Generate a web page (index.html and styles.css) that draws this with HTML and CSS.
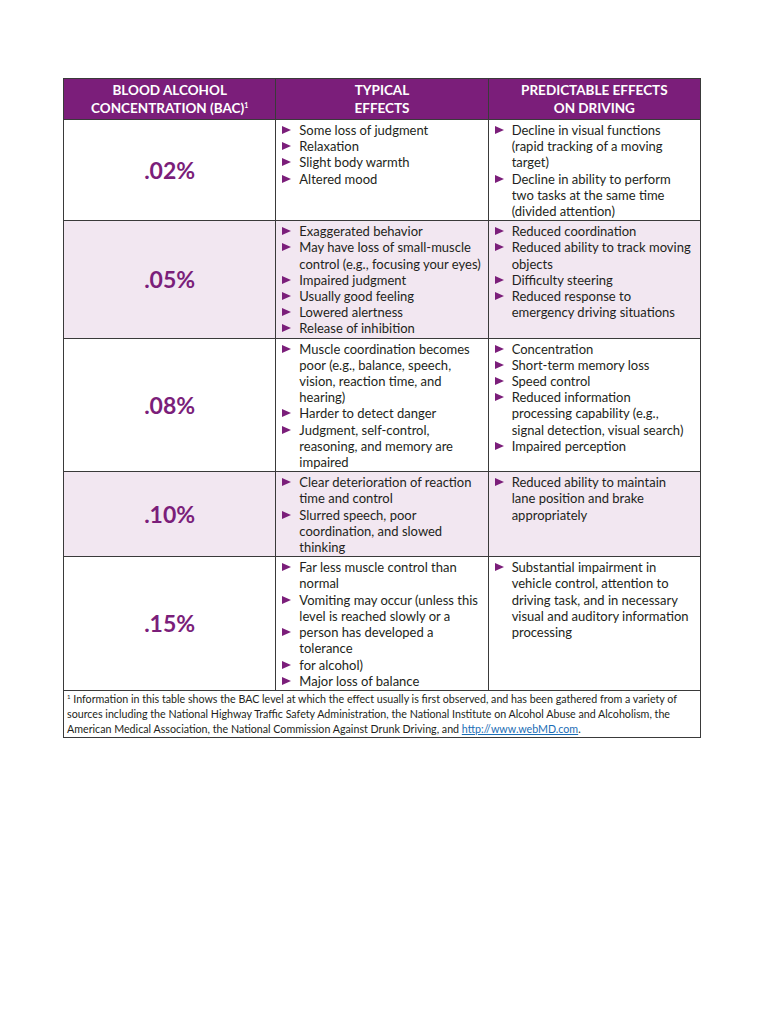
FILE: index.html
```html
<!DOCTYPE html>
<html lang="en">
<head>
  <meta charset="UTF-8">
  <meta name="viewport" content="width=device-width, initial-scale=1.0">
  <title>BAC Effects</title>
  <link rel="stylesheet" href="styles.css">
</head>
<body>
  <table class="bac-table">
    <thead>
      <tr class="head-row">
        <th>BLOOD ALCOHOL<br>CONCENTRATION (BAC)<sup>1</sup></th>
        <th>TYPICAL<br>EFFECTS</th>
        <th>PREDICTABLE EFFECTS<br>ON DRIVING</th>
      </tr>
    </thead>
    <tbody>
      <!-- .02 -->
      <tr class="r1">
        <td class="level">.02%</td>
        <td>
          <ul>
            <li>Some loss of judgment</li>
            <li>Relaxation</li>
            <li>Slight body warmth</li>
            <li>Altered mood</li>
          </ul>
        </td>
        <td class="driving">
          <ul>
            <li>Decline in visual functions (rapid tracking of a moving target)</li>
            <li>Decline in ability to perform two tasks at the same time (divided attention)</li>
          </ul>
        </td>
      </tr>
      <!-- .05 -->
      <tr class="r2 shaded">
        <td class="level">.05%</td>
        <td>
          <ul>
            <li>Exaggerated behavior</li>
            <li>May have loss of small-muscle control (e.g., focusing your eyes)</li>
            <li>Impaired judgment</li>
            <li>Usually good feeling</li>
            <li>Lowered alertness</li>
            <li>Release of inhibition</li>
          </ul>
        </td>
        <td class="driving">
          <ul>
            <li>Reduced coordination</li>
            <li>Reduced ability to track moving objects</li>
            <li>Difficulty steering</li>
            <li>Reduced response to emergency driving situations</li>
          </ul>
        </td>
      </tr>
      <!-- .08 -->
      <tr class="r3">
        <td class="level">.08%</td>
        <td>
          <ul>
            <li>Muscle coordination becomes poor (e.g., balance, speech, vision, reaction time, and hearing)</li>
            <li>Harder to detect danger</li>
            <li>Judgment, self-control, reasoning, and memory are impaired</li>
          </ul>
        </td>
        <td class="driving">
          <ul>
            <li>Concentration</li>
            <li>Short-term memory loss</li>
            <li>Speed control</li>
            <li><span>Reduced information<br>processing capability (e.g.,<br>signal detection, visual search)</span></li>
            <li>Impaired perception</li>
          </ul>
        </td>
      </tr>
      <!-- .10 -->
      <tr class="r4 shaded">
        <td class="level">.10%</td>
        <td>
          <ul>
            <li>Clear deterioration of reaction time and control</li>
            <li>Slurred speech, poor coordination, and slowed thinking</li>
          </ul>
        </td>
        <td class="driving">
          <ul>
            <li><span>Reduced ability to maintain<br>lane position and brake<br>appropriately</span></li>
          </ul>
        </td>
      </tr>
      <!-- .15 -->
      <tr class="r5">
        <td class="level">.15%</td>
        <td>
          <ul>
            <li>Far less muscle control than normal</li>
            <li>Vomiting may occur (unless this level is reached slowly or a</li>
            <li>person has developed a tolerance</li>
            <li>for alcohol)</li>
            <li>Major loss of balance</li>
          </ul>
        </td>
        <td class="driving">
          <ul>
            <li>Substantial impairment in vehicle control, attention to driving task, and in necessary visual and auditory information processing</li>
          </ul>
        </td>
      </tr>
      <tr class="note-row">
        <td colspan="3" class="note">
          <sup>1</sup> Information in this table shows the BAC level at which the effect usually is first observed, and has been gathered from a variety of sources including the National Highway Traffic Safety Administration, the National Institute on Alcohol Abuse and Alcoholism, the American Medical Association, the National Commission Against Drunk Driving, and <a href="#">http://www.webMD.com</a>.
        </td>
      </tr>
    </tbody>
  </table>
</body>
</html>
```

FILE: styles.css
```css
body {
  margin: 0;
  padding: 78px 0 0 63px;
  background-color: #fff;
  color: #231f20;
  font-family: 'Lato', sans-serif;
}

.bac-table {
  width: 638px;
  border-collapse: collapse;
  table-layout: fixed;
  font-size: 13px;
  line-height: 16.2px;
}

.bac-table th,
.bac-table td {
  border: 1px solid #3a3a3a;
  vertical-align: top;
}

.head-row th {
  height: 40px;
  padding: 0;
  background-color: #7b1e7a;
  color: #fff;
  font-weight: bold;
  font-size: 13.5px;
  line-height: 18px;
  text-align: center;
  vertical-align: middle;
}

.head-row sup {
  font-size: 7px;
  vertical-align: 5px;
  line-height: 0;
}

.shaded td {
  background-color: #f2e7f1;
}

.bac-table td {
  padding: 2px 4px 1px 6px;
}

.bac-table td.driving {
  padding-right: 6px;
}

.r1 td { height: 92px; }
.r2 td { height: 112px; }
.r3 td { height: 126px; }
.r4 td { height: 76px; }
.r5 td { height: 126px; }

td.level {
  vertical-align: middle;
  text-align: center;
  color: #7b1e7a;
  font-weight: bold;
  font-size: 23px;
}

.bac-table td.level {
  padding: 2px 0;
}

ul {
  list-style: none;
  margin: 0;
  padding: 0;
}

li {
  display: flex;
  gap: 8px;
}

li::before {
  content: "";
  flex: none;
  width: 0;
  height: 0;
  margin-top: 4px;
  border-left: 9px solid #7b1e7a;
  border-top: 4.5px solid transparent;
  border-bottom: 4.5px solid transparent;
}

.bac-table td.note {
  height: 39px;
  padding: 0 4px 1px 3px;
  font-size: 10.7px;
  line-height: 15px;
}

.note sup {
  font-size: 6px;
  vertical-align: 4px;
  line-height: 0;
}

.note a {
  color: #1a6db5;
}
```
